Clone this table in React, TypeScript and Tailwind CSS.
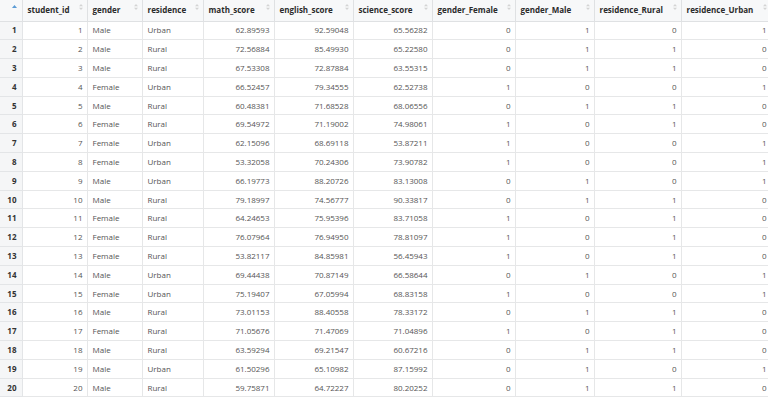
type Row = [number, string, string, string, string, string, number, number, number, number];

const rows: Row[] = [
  [1, "Male", "Urban", "62.89593", "92.59048", "65.56282", 0, 1, 0, 1],
  [2, "Male", "Rural", "72.56884", "85.49930", "65.22580", 0, 1, 1, 0],
  [3, "Male", "Rural", "67.53308", "72.87884", "63.55315", 0, 1, 1, 0],
  [4, "Female", "Urban", "66.52457", "79.34555", "62.52738", 1, 0, 0, 1],
  [5, "Male", "Rural", "60.48381", "71.68528", "68.06556", 0, 1, 1, 0],
  [6, "Female", "Rural", "69.54972", "71.19002", "74.98061", 1, 0, 1, 0],
  [7, "Female", "Urban", "62.15096", "68.69118", "53.87211", 1, 0, 0, 1],
  [8, "Female", "Urban", "53.32058", "70.24306", "73.90782", 1, 0, 0, 1],
  [9, "Male", "Urban", "66.19773", "88.20726", "83.13008", 0, 1, 0, 1],
  [10, "Male", "Rural", "79.18997", "74.56777", "90.33817", 0, 1, 1, 0],
  [11, "Female", "Rural", "64.24653", "75.95396", "83.71058", 1, 0, 1, 0],
  [12, "Female", "Rural", "76.07964", "76.94950", "78.81097", 1, 0, 1, 0],
  [13, "Female", "Rural", "53.82117", "84.85981", "56.45943", 1, 0, 1, 0],
  [14, "Male", "Urban", "69.44438", "70.87149", "66.58644", 0, 1, 0, 1],
  [15, "Female", "Urban", "75.19407", "67.05994", "68.83158", 1, 0, 0, 1],
  [16, "Male", "Rural", "73.01153", "88.40558", "78.33172", 0, 1, 1, 0],
  [17, "Female", "Rural", "71.05676", "71.47069", "71.04896", 1, 0, 1, 0],
  [18, "Male", "Rural", "63.59294", "69.21547", "60.67216", 0, 1, 1, 0],
  [19, "Male", "Urban", "61.50296", "65.10982", "87.15992", 0, 1, 0, 1],
  [20, "Male", "Rural", "59.75871", "64.72227", "80.20252", 0, 1, 1, 0],
];

const columns = [
  { name: "student_id", width: 65, num: true },
  { name: "gender", width: 55, num: false },
  { name: "residence", width: 61, num: false },
  { name: "math_score", width: 71, num: true },
  { name: "english_score", width: 79, num: true },
  { name: "science_score", width: 79, num: true },
  { name: "gender_Female", width: 83, num: true },
  { name: "gender_Male", width: 79, num: true },
  { name: "residence_Rural", width: 87, num: true },
  { name: "residence_Urban", width: 90, num: true },
];

function SortIcon() {
  return (
    <svg width="4" height="6" viewBox="0 0 4 6" className="absolute right-[4px] top-[4px]">
      <path d="M2 0 L4 2.3 L0 2.3 Z" fill="#d4d4d4" />
      <path d="M2 6 L4 3.7 L0 3.7 Z" fill="#d4d4d4" />
    </svg>
  );
}

export default function App() {
  return (
    <div className="w-[768px] h-[399px] overflow-hidden bg-white" style={{ fontFamily: '"Open Sans", "Noto Sans", sans-serif' }}>
      <table className="table-fixed border-collapse w-[771px] text-[8px]">
        <colgroup>
          <col className="w-[22px]" />
          {columns.map((c) => (
            <col key={c.name} style={{ width: c.width }} />
          ))}
        </colgroup>
        <thead>
          <tr className="h-[21px] bg-[#f7f8f9]">
            <th className="relative border-r border-b border-[#dfe1e3]">
              <svg width="5" height="3" viewBox="0 0 5 3" className="absolute right-[5px] top-[5px]">
                <path d="M2.5 0 L5 3 L0 3 Z" fill="#5b9bd5" />
              </svg>
            </th>
            {columns.map((c) => (
              <th
                key={c.name}
                className="relative border-r border-b border-[#dfe1e3] pl-[5px] text-left font-bold text-[#2b2b2b] whitespace-nowrap"
              >
                {c.name}
                <SortIcon />
              </th>
            ))}
          </tr>
        </thead>
        <tbody>
          {rows.map((r) => (
            <tr key={r[0]} className="h-[18.8px]">
              <td className="bg-[#f5f6f7] border-r border-b border-[#e3e5e7] pr-[5px] text-right font-bold text-[#333333]">
                {r[0]}
              </td>
              {r.map((v, i) => (
                <td
                  key={i}
                  className={
                    "border-r border-b border-[#e6e7e8] text-[#555555] whitespace-nowrap " +
                    (columns[i].num ? "text-right pr-[4px]" : "text-left pl-[5px]")
                  }
                >
                  {v}
                </td>
              ))}
            </tr>
          ))}
        </tbody>
      </table>
    </div>
  );
}
